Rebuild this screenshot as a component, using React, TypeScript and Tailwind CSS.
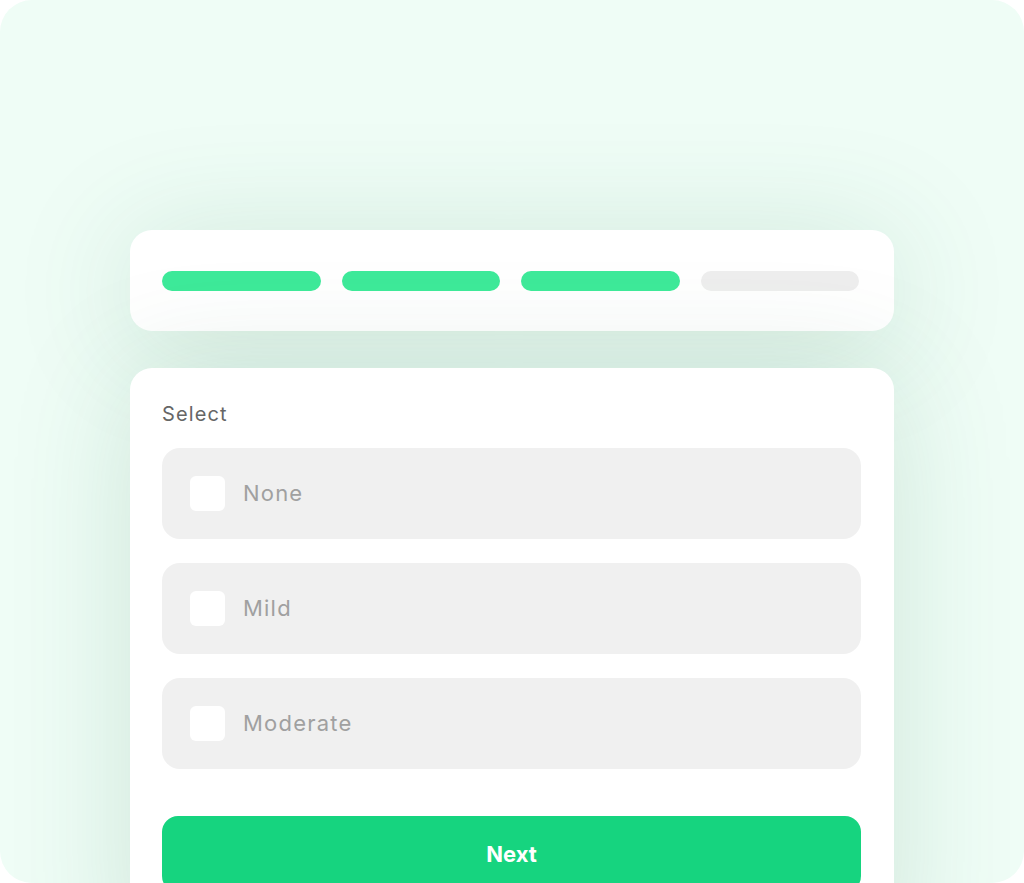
import React from "react";

const steps = [true, true, true, false];
const options = ["None", "Mild", "Moderate"];

const App = () => {
  return (
    <div className="w-[1024px] h-[883px] bg-white">
      <div
        className="w-full h-full rounded-[32px] bg-[#effdf6] overflow-hidden pt-[230px] px-[130px]"
        style={{ fontFamily: "Inter, 'Noto Sans', sans-serif" }}
      >
        <div className="flex flex-col gap-[37px]">
          <div className="bg-white rounded-[22px] h-[101px] pl-8 pr-[35px] flex items-center gap-[21px] shadow-[0_10px_120px_rgba(40,110,75,0.17)]">
            {steps.map((done, i) => (
              <div
                key={i}
                className={
                  done
                    ? "flex-1 h-5 rounded-full bg-[#3eea9a]"
                    : "flex-1 h-5 rounded-full bg-[#eeeeee]"
                }
              />
            ))}
          </div>

          <div className="bg-white rounded-t-[22px] h-[600px] pl-8 pr-[33px] pt-[32px] shadow-[0_10px_120px_rgba(40,110,75,0.17)]">
            <div className="text-[20px] leading-[28px] text-[#666666] tracking-[1.1px]">Select</div>
            <div className="mt-[20px] flex flex-col gap-[24px]">
              {options.map((label) => (
                <div
                  key={label}
                  className="h-[91px] rounded-[18px] bg-[#f0f0f0] flex items-center pl-7 gap-[18px]"
                >
                  <div className="w-[35px] h-[35px] rounded-[6px] bg-white" />
                  <span className="text-[22px] text-[#a0a0a0] tracking-[1.2px]">{label}</span>
                </div>
              ))}
            </div>
            <button className="mt-[47px] w-full h-[76px] rounded-[16px] bg-[#16d47f] text-white text-[22px] font-bold">
              Next
            </button>
          </div>
        </div>
      </div>
    </div>
  );
};

export default App;
